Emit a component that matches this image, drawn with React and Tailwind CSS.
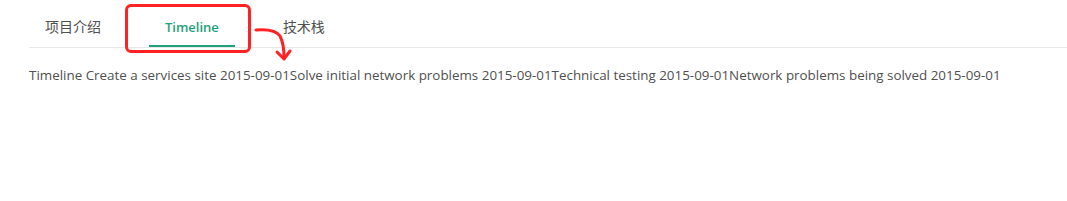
import React, { useState } from 'react'

const tabs = [
  { key: 'intro', label: '项目介绍' },
  { key: 'timeline', label: 'Timeline' },
  { key: 'stack', label: '技术栈' },
];

const timeline = [
  { title: 'Create a services site', time: '2015-09-01' },
  { title: 'Solve initial network problems', time: '2015-09-01' },
  { title: 'Technical testing', time: '2015-09-01' },
  { title: 'Network problems being solved', time: '2015-09-01' },
];

const App = () => {
  const [active, setActive] = useState('timeline');

  return (
    <div
      className="relative w-[1067px] h-[201px] bg-white text-[#505050] pl-[29px]"
      style={{ fontFamily: '"Open Sans", "Noto Sans CJK SC", sans-serif' }}
    >
      {/* Tab bar */}
      <div className="flex gap-[32px] h-[48px] border-b border-[#e8e8e8]">
        {tabs.map(tab => (
          <button
            key={tab.key}
            onClick={() => setActive(tab.key)}
            className={
              'relative px-4 pt-[7px] h-[47px] leading-[22px] ' +
              (active === tab.key ? 'text-[#1fa27a] font-semibold text-[13px]' : 'text-[#505050] text-[14px]')
            }
          >
            {tab.label}
            {active === tab.key && (
              <span className="absolute left-0 right-0 bottom-0 h-[2px] bg-[#1fa27a]" />
            )}
          </button>
        ))}
      </div>

      {/* Content */}
      <div className="pt-[17px] text-[13.4px] leading-[20px] whitespace-nowrap">
        Timeline {timeline.map(item => `${item.title} ${item.time}`).join('')}
      </div>

      {/* red annotation */}
      <div className="absolute left-[125px] top-[4px] w-[126px] h-[49px] border-[3px] border-[#f22] rounded-[6px] pointer-events-none" />
      <svg className="absolute left-[250px] top-[24px] pointer-events-none" width="48" height="40" viewBox="0 0 48 40">
        <path d="M6 6 C18 5 26 6 30 12 C33 18 34 26 34 33" fill="none" stroke="#f22" strokeWidth="3" strokeLinecap="round" />
        <path d="M27 28 L34 35 L40 27" fill="none" stroke="#f22" strokeWidth="3" strokeLinecap="round" strokeLinejoin="round" />
      </svg>
    </div>
  );
};

export default App;
